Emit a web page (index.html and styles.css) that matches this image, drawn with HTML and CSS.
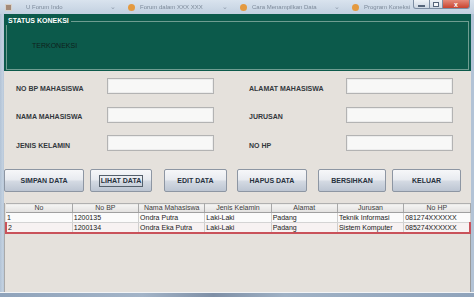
FILE: index.html
```html
<!DOCTYPE html>
<html>
<head>
<meta charset="utf-8">
<link rel="stylesheet" href="styles.css">
</head>
<body>
<div class="window">
  <div class="titlebar">
    <div class="tb-left">
      <span class="app-icon"></span>
      <span class="tab tab-first">U Forum Indo</span>
      <span class="caret">&#8964;</span>
      <span class="tab"><i class="orb"></i>Forum dalam XXX XXX</span>
      <span class="caret">&#8964;</span>
      <span class="tab"><i class="orb"></i>Cara Menampilkan Data</span>
      <span class="caret">&#8964;</span>
      <span class="tab"><i class="orb"></i>Program Koneksi</span>
    </div>
    <div class="winbtns">
      <span class="wb wb-min"><i></i></span>
      <span class="wb wb-max"><i></i></span>
      <span class="wb wb-close">x</span>
    </div>
  </div>
  <div class="frame">
    <div class="content">
      <div class="status">
        <fieldset class="status-box">
          <legend>STATUS KONEKSI</legend>
          <div class="status-text">TERKONEKSI</div>
        </fieldset>
      </div>
      <div class="form-grid">
        <label class="lbl">NO BP MAHASISWA</label>
        <span class="field"></span>
        <span></span>
        <label class="lbl">ALAMAT MAHASISWA</label>
        <span class="field"></span>

        <label class="lbl">NAMA MAHASISWA</label>
        <span class="field"></span>
        <span></span>
        <label class="lbl">JURUSAN</label>
        <span class="field"></span>

        <label class="lbl">JENIS KELAMIN</label>
        <span class="field"></span>
        <span></span>
        <label class="lbl">NO HP</label>
        <span class="field"></span>
      </div>
      <div class="buttons">
        <button class="btn b-simpan">SIMPAN DATA</button>
        <button class="btn b-lihat"><span class="focus">LIHAT DATA</span></button>
        <button class="btn b-edit">EDIT DATA</button>
        <button class="btn b-hapus">HAPUS DATA</button>
        <button class="btn b-bersih">BERSIHKAN</button>
        <button class="btn b-keluar">KELUAR</button>
      </div>
      <div class="table-pane">
        <table class="grid">
          <thead>
            <tr><th>No</th><th>No BP</th><th>Nama Mahasiswa</th><th>Jenis Kelamin</th><th>Alamat</th><th>Jurusan</th><th>No HP</th></tr>
          </thead>
          <tbody>
            <tr><td>1</td><td>1200135</td><td>Ondra Putra</td><td>Laki-Laki</td><td>Padang</td><td>Teknik Informasi</td><td>081274XXXXXX</td></tr>
            <tr class="sel"><td>2</td><td>1200134</td><td>Ondra Eka Putra</td><td>Laki-Laki</td><td>Padang</td><td>Sistem Komputer</td><td>085274XXXXXX</td></tr>
          </tbody>
        </table>
      </div>
    </div>
  </div>
  <div class="taskbar"></div>
</div>
</body>
</html>
```
FILE: styles.css
```css
* { box-sizing: border-box; }
html, body { margin: 0; padding: 0; }
body {
  width: 474px;
  height: 297px;
  overflow: hidden;
  font-family: "Liberation Sans", Arial, sans-serif;
  background: #b7c7da;
}
.window {
  width: 474px;
  height: 297px;
  display: flex;
  flex-direction: column;
}
.titlebar {
  height: 14px;
  flex: none;
  display: flex;
  justify-content: space-between;
  background: linear-gradient(#d9e3ee, #c2d0e0);
}
.tb-left {
  display: flex;
  align-items: center;
  filter: blur(0.7px);
  font-size: 6px;
  color: #7d8a9a;
  white-space: nowrap;
}
.app-icon {
  width: 7px;
  height: 7px;
  margin-left: 5px;
  margin-right: 14px;
  background: #a48a78;
  border: 1px solid #d7d0c8;
}
.tab { display: flex; align-items: center; }
.tab-first { width: 84px; }
.caret { width: 16px; color: #8e9bab; font-size: 7px; }
.orb {
  width: 7px;
  height: 7px;
  border-radius: 50%;
  background: #e49a40;
  margin-right: 5px;
  margin-left: 2px;
}
.tb-left .tab:nth-child(4), .tb-left .tab:nth-child(6) { width: 96px; }
.winbtns {
  display: flex;
  height: 9px;
  margin-right: 4px;
}
.wb {
  height: 9px;
  border: 1px solid #7d8ea3;
  border-top: none;
  display: flex;
  align-items: center;
  justify-content: center;
}
.wb-min {
  width: 17px;
  background: linear-gradient(#eef2f7, #cdd7e3);
  border-radius: 0 0 0 3px;
}
.wb-min i { width: 7px; height: 2px; background: #fff; border: 1px solid #55657a; margin-top: 3px; }
.wb-max {
  width: 13px;
  background: linear-gradient(#eef2f7, #cdd7e3);
  border-left: none;
}
.wb-max i { width: 6px; height: 5px; border: 1px solid #55657a; background: #f5f7fa; }
.wb-close {
  width: 27px;
  background: linear-gradient(#e48a7a, #c9432f);
  border-left: none;
  border-radius: 0 0 3px 0;
  color: #fff;
  font-weight: bold;
  font-size: 7px;
  line-height: 1;
}
.frame {
  flex: 1;
  display: flex;
  padding: 0 3px 0 4px;
  background: linear-gradient(90deg, #b3c3d6 0, #c4d2e1 3px, #b3c3d6 4px);
}
.content {
  flex: 1;
  display: flex;
  flex-direction: column;
  background: #e5e1dc;
}
.status {
  height: 57px;
  flex: none;
  background: #0c5a4b;
  padding: 3px 2px 1px 2px;
}
.status-box {
  margin: 0;
  height: 53px;
  border: 1px solid #6f9d91;
  padding: 0 0 0 25px;
}
.status-box legend {
  margin-left: -26px;
  padding: 0 2px;
  font-size: 7px;
  line-height: 8px;
  font-weight: bold;
  color: #ffffff;
}
.status-text {
  margin-top: 17px;
  font-size: 7px;
  line-height: 8px;
  color: #0f211b;
}
.form-grid {
  display: grid;
  grid-template-columns: 91px 107px 35px 97px 107px;
  grid-auto-rows: 16px;
  row-gap: 12.5px;
  padding: 7px 0 0 12px;
  align-items: center;
}
.lbl {
  font-size: 7px;
  font-weight: bold;
  color: #33383c;
  padding-top: 4px;
  white-space: nowrap;
}
.field {
  height: 16px;
  background: #f8f8f7;
  border: 1px solid #b3b3b3;
  box-shadow: inset 0 0 0 1px #ececec;
}
.buttons {
  display: flex;
  margin-top: 18px;
  height: 23px;
}
.btn {
  height: 23px;
  padding: 0;
  border: 1px solid #8d96a3;
  border-radius: 2px;
  background: linear-gradient(#f6f7f9 0%, #e8ebf0 45%, #d3d9e2 55%, #bcc5d2 100%);
  font-family: "Liberation Sans", Arial, sans-serif;
  font-size: 7px;
  font-weight: bold;
  color: #27313d;
  display: flex;
  align-items: center;
  justify-content: center;
}
.b-simpan { width: 80px; }
.b-lihat { width: 62px; margin-left: 6px; }
.b-edit { width: 63px; margin-left: 12px; }
.b-hapus { width: 70px; margin-left: 10px; }
.b-bersih { width: 68px; margin-left: 11px; }
.b-keluar { width: 69px; margin-left: 6px; }
.focus {
  border: 1px solid #55606c;
  padding: 1px 1px;
  line-height: 8px;
}
.table-pane {
  flex: 1;
  margin-top: 11px;
  width: 467px;
  border-left: 1px solid #a9a9a9;
  border-right: 1px solid #9a9a9a;
}
.grid {
  width: 466px;
  border-collapse: collapse;
  table-layout: fixed;
  font-size: 7px;
}
.grid th {
  height: 9px;
  padding: 0;
  font-weight: normal;
  color: #3d3d3d;
  text-align: center;
  line-height: 8px;
  background: linear-gradient(#f5f5f4, #e2e1df);
  border-top: 1px solid #b0b0b0;
  border-right: 1px solid #a8a8a8;
  border-bottom: 1px solid #a0a0a0;
}
.grid td {
  height: 10px;
  padding: 0 0 0 1px;
  line-height: 9px;
  color: #1a1a1a;
  background: #fbfbfb;
  border-right: 1px solid #cfcfcf;
  border-bottom: 1px solid #d4d4d4;
  white-space: nowrap;
  overflow: hidden;
}
.grid tr.sel td {
  background: #f7f2f2;
  border-top: 1px solid #c9525a;
  border-bottom: 2px solid #c9525a;
}
.grid tr.sel td:first-child { border-left: 2px solid #c9525a; }
.grid tr.sel td:last-child { border-right: 2px solid #c9525a; }
.taskbar {
  height: 5px;
  flex: none;
  border-top: 1px solid #f2f4f6;
  background: linear-gradient(90deg, #8fa3bb, #a3b4c8 30%, #7e8fa6 45%, #9fb1c5 60%, #8fa3bb);
}
```
